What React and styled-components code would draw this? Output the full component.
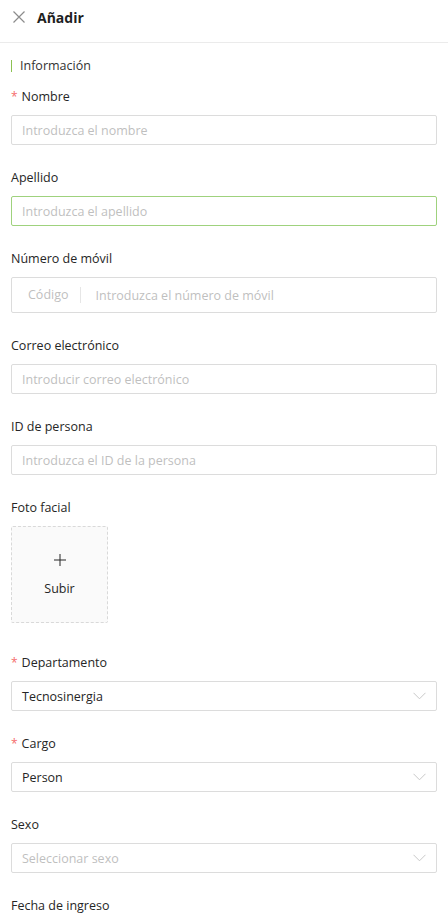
import React from "react";
import styled, { createGlobalStyle } from "styled-components";

const GlobalStyle = createGlobalStyle`
  html, body {
    margin: 0;
    padding: 0;
    background: #fff;
    font-family: "Open Sans", "Noto Sans", "Liberation Sans", sans-serif;
    color: #262626;
  }
  * { box-sizing: border-box; }
`;

const Page = styled.div`
  width: 448px;
  height: 920px;
  overflow: hidden;
  background: #fff;
`;

const Header = styled.header`
  height: 43px;
  display: flex;
  align-items: center;
  gap: 12px;
  padding: 0 12px 8px 13px;
  border-bottom: 1px solid #ebebeb;
`;

const Title = styled.h1`
  margin: 0;
  font-size: 14px;
  font-weight: 700;
  color: #1f1f1f;
`;

const Body = styled.div`
  padding: 0 11px;
  display: flex;
  flex-direction: column;
`;

const Section = styled.div`
  margin-top: 13px;
  margin-bottom: 11px;
  display: flex;
  align-items: center;
  gap: 8px;
  font-size: 12.5px;
  color: #333;
  line-height: 20px;
  &::before {
    content: "";
    width: 1px;
    height: 12px;
    background: #8cc152;
  }
`;

const Field = styled.div`
  display: flex;
  flex-direction: column;
  gap: 8px;
  margin-bottom: ${(p) => p.$mb || 23}px;
`;

const Label = styled.label`
  font-size: 12.5px;
  line-height: 20px;
  color: #262626;
  display: flex;
  align-items: center;
`;

const Star = styled.span`
  color: #f56c6c;
  font-size: 12px;
  margin-right: 4px;
`;

const Box = styled.div`
  height: ${(p) => p.$h || 30}px;
  border: 1px solid ${(p) => (p.$focus ? "#9fd27d" : "#dcdcdc")};
  border-radius: 2px;
  display: flex;
  align-items: center;
  padding: 0 10px;
  font-size: 12.5px;
  color: ${(p) => (p.$value ? "#262626" : "#bfbfbf")};
`;

const Text = styled.span`
  flex: 1;
`;

const Code = styled.span`
  padding: 0 11px 0 6px;
  border-right: 1px solid #e6e6e6;
  line-height: 16px;
  margin-right: 15px;
`;

const Upload = styled.div`
  width: 97px;
  height: 97px;
  background: #fafafa;
  border: 1px dashed #d9d9d9;
  border-radius: 2px;
  display: flex;
  flex-direction: column;
  align-items: center;
  justify-content: center;
  gap: 14px;
  padding-top: 2px;
  font-size: 12.5px;
  color: #262626;
`;

const Close = () => (
  <svg width="12" height="12" viewBox="0 0 12 12">
    <path d="M0.5 0.5L11.5 11.5M11.5 0.5L0.5 11.5" stroke="#8c8c8c" strokeWidth="1.2" />
  </svg>
);

const Plus = () => (
  <svg width="12" height="12" viewBox="0 0 12 12">
    <path d="M6 0V12M0 6H12" stroke="#262626" strokeWidth="1" />
  </svg>
);

const Chevron = () => (
  <svg width="13" height="8" viewBox="0 0 13 8">
    <path d="M0.5 0.8L6.5 6.8L12.5 0.8" stroke="#c8c8c8" strokeWidth="1" fill="none" />
  </svg>
);

const Input = ({ label, required, placeholder, focus }) => (
  <Field>
    <Label>
      {required && <Star>*</Star>}
      {label}
    </Label>
    <Box $focus={focus}>
      <Text>{placeholder}</Text>
    </Box>
  </Field>
);

const Select = ({ label, required, value, placeholder }) => (
  <Field>
    <Label>
      {required && <Star>*</Star>}
      {label}
    </Label>
    <Box $value={!!value}>
      <Text>{value || placeholder}</Text>
      <Chevron />
    </Box>
  </Field>
);

export default function App() {
  return (
    <Page>
      <GlobalStyle />
      <Header>
        <Close />
        <Title>Añadir</Title>
      </Header>
      <Body>
        <Section>Información</Section>
        <Input label="Nombre" required placeholder="Introduzca el nombre" />
        <Input label="Apellido" placeholder="Introduzca el apellido" focus />
        <Field>
          <Label>Número de móvil</Label>
          <Box $h={36}>
            <Code>Código</Code>
            <Text>Introduzca el número de móvil</Text>
          </Box>
        </Field>
        <Input label="Correo electrónico" placeholder="Introducir correo electrónico" />
        <Input label="ID de persona" placeholder="Introduzca el ID de la persona" />
        <Field $mb={30}>
          <Label>Foto facial</Label>
          <Upload>
            <Plus />
            <span>Subir</span>
          </Upload>
        </Field>
        <Select label="Departamento" required value="Tecnosinergia" />
        <Select label="Cargo" required value="Person" />
        <Select label="Sexo" placeholder="Seleccionar sexo" />
        <Field>
          <Label>Fecha de ingreso</Label>
        </Field>
      </Body>
    </Page>
  );
}
